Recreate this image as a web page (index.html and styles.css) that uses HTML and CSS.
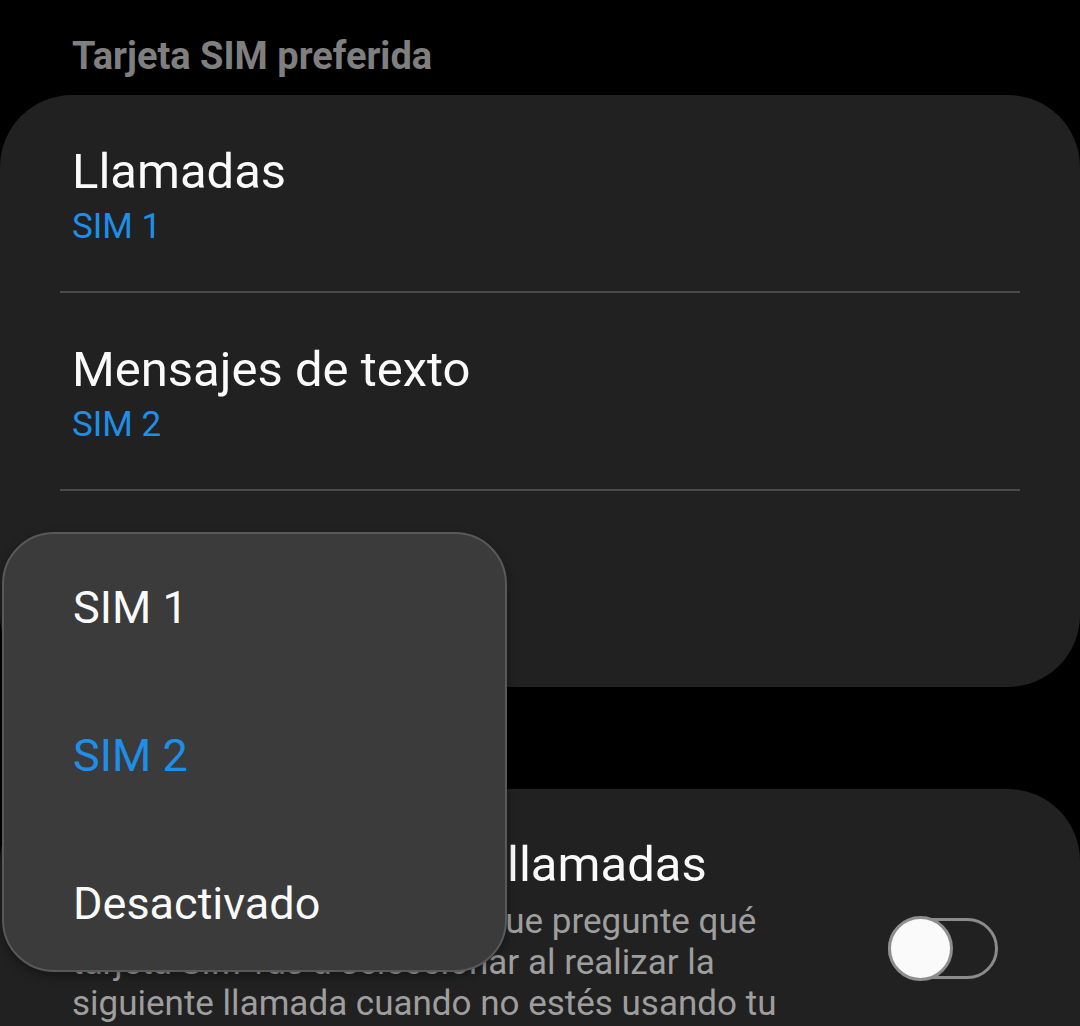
FILE: index.html
```html
<!DOCTYPE html>
<html lang="es">
<head>
  <meta charset="UTF-8" />
  <meta name="viewport" content="width=device-width, initial-scale=1.0" />
  <title>Administrador de tarjetas SIM</title>
  <link rel="stylesheet" href="styles.css">
</head>
<body>
  <div class="section-title">Tarjeta SIM preferida</div>

  <div class="card">
    <div class="pref-row">
      <div class="pref-title">Llamadas</div>
      <div class="pref-value">SIM 1</div>
    </div>
    <div class="divider"></div>
    <div class="pref-row">
      <div class="pref-title">Mensajes de texto</div>
      <div class="pref-value">SIM 2</div>
    </div>
    <div class="divider"></div>
    <div class="pref-row">
      <div class="pref-title">Datos móviles</div>
      <div class="pref-value">SIM 2</div>
    </div>
  </div>

  <div class="card card-switch">
    <div class="switch-text">
      <div class="pref-title">Confirmar SIM para llamadas</div>
      <div class="pref-desc">Emitir un aviso emergente que pregunte qué tarjeta SIM vas a seleccionar al realizar la siguiente llamada cuando no estés usando tu tarjeta SIM preferida.</div>
    </div>
    <div class="switch">
      <div class="switch-knob"></div>
    </div>
  </div>

  <div class="popup">
    <div class="popup-item">SIM 1</div>
    <div class="popup-item selected">SIM 2</div>
    <div class="popup-item">Desactivado</div>
  </div>
</body>
</html>
```

FILE: styles.css
```css
body {
  margin: 0;
  background: #000;
  color: #fafafa;
  font-family: Roboto, 'Noto Sans', sans-serif;
  height: 1026px;
  overflow: hidden;
  position: relative;
}
.section-title {
  font-size: 38px;
  font-weight: bold;
  line-height: 45px;
  color: #7f7f7f;
  padding: 34px 72px 16px;
}
.card {
  background: #212121;
  border-radius: 72px;
}
.pref-row {
  padding: 48px 72px 44px;
}
.pref-title {
  font-size: 49px;
  line-height: 58px;
}
.pref-value {
  font-size: 35px;
  line-height: 40px;
  margin-top: 6px;
  color: #1e8fe8;
}
.divider {
  height: 2px;
  margin: 0 60px;
  background: #4a4a4a;
}
.card-switch {
  margin-top: 102px;
  padding: 47px 82px 60px 72px;
  display: flex;
  align-items: flex-start;
}
.switch-text {
  width: 740px;
}
.pref-desc {
  font-size: 35px;
  line-height: 41px;
  margin-top: 7px;
  color: #9e9e9e;
}
.switch {
  margin-left: auto;
  margin-top: 82px;
  width: 110px;
  height: 61px;
  box-sizing: border-box;
  border: 3px solid #8c8c8c;
  border-radius: 31px;
  position: relative;
  flex-shrink: 0;
}
.switch-knob {
  position: absolute;
  left: -3px;
  top: -5px;
  width: 65px;
  height: 65px;
  box-sizing: border-box;
  border-radius: 50%;
  background: #fafafa;
  border: 3px solid #8e8e8e;
}
.popup {
  position: absolute;
  left: 2px;
  top: 532px;
  width: 505px;
  height: 440px;
  box-sizing: border-box;
  background: #3b3b3b;
  border: 2px solid #595959;
  border-radius: 52px;
  padding: 44px 69px 36px;
  display: flex;
  flex-direction: column;
  gap: 88px;
  box-shadow: 0 4px 10px rgba(0, 0, 0, 0.35);
}
.popup-item {
  font-size: 45px;
  line-height: 60px;
  color: #fafafa;
}
.popup-item.selected {
  color: #1e8fe8;
}
```
